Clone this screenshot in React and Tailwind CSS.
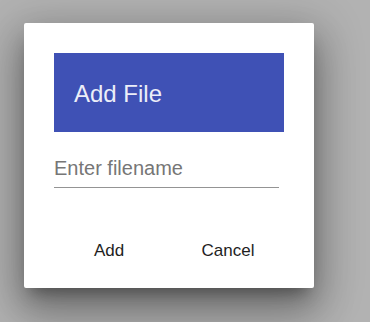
export default function App() {
  return (
    <div className="min-h-screen w-full bg-[#b2b2b2] pl-[24px] pt-[23px] font-['Liberation_Sans',Arial,sans-serif]">
      <div className="w-[290px] rounded-[2px] bg-white px-[30px] pt-[30px] pb-[19px] shadow-[0_11px_15px_-7px_rgba(0,0,0,0.35),0_24px_38px_3px_rgba(0,0,0,0.24),0_9px_46px_8px_rgba(0,0,0,0.2)]">
        <div className="flex h-[79px] items-center bg-[#3f51b5] pl-[20px] pt-[2px]">
          <h2 className="text-[24px] leading-none text-[#eceef8]">Add File</h2>
        </div>

        <input
          type="text"
          placeholder="Enter filename"
          className="mt-[18px] block h-[38px] w-[225px] border-b border-[#949494] bg-transparent text-[20px] text-[#222] outline-none placeholder:text-[#767676]"
        />

        <div className="mt-[45px] flex gap-[31px] pl-[11px]">
          <button className="h-[36px] w-[88px] text-center text-[17px] text-[#1e1e1e]">
            Add
          </button>
          <button className="h-[36px] w-[88px] text-center text-[17px] text-[#1e1e1e]">
            Cancel
          </button>
        </div>
      </div>
    </div>
  );
}
